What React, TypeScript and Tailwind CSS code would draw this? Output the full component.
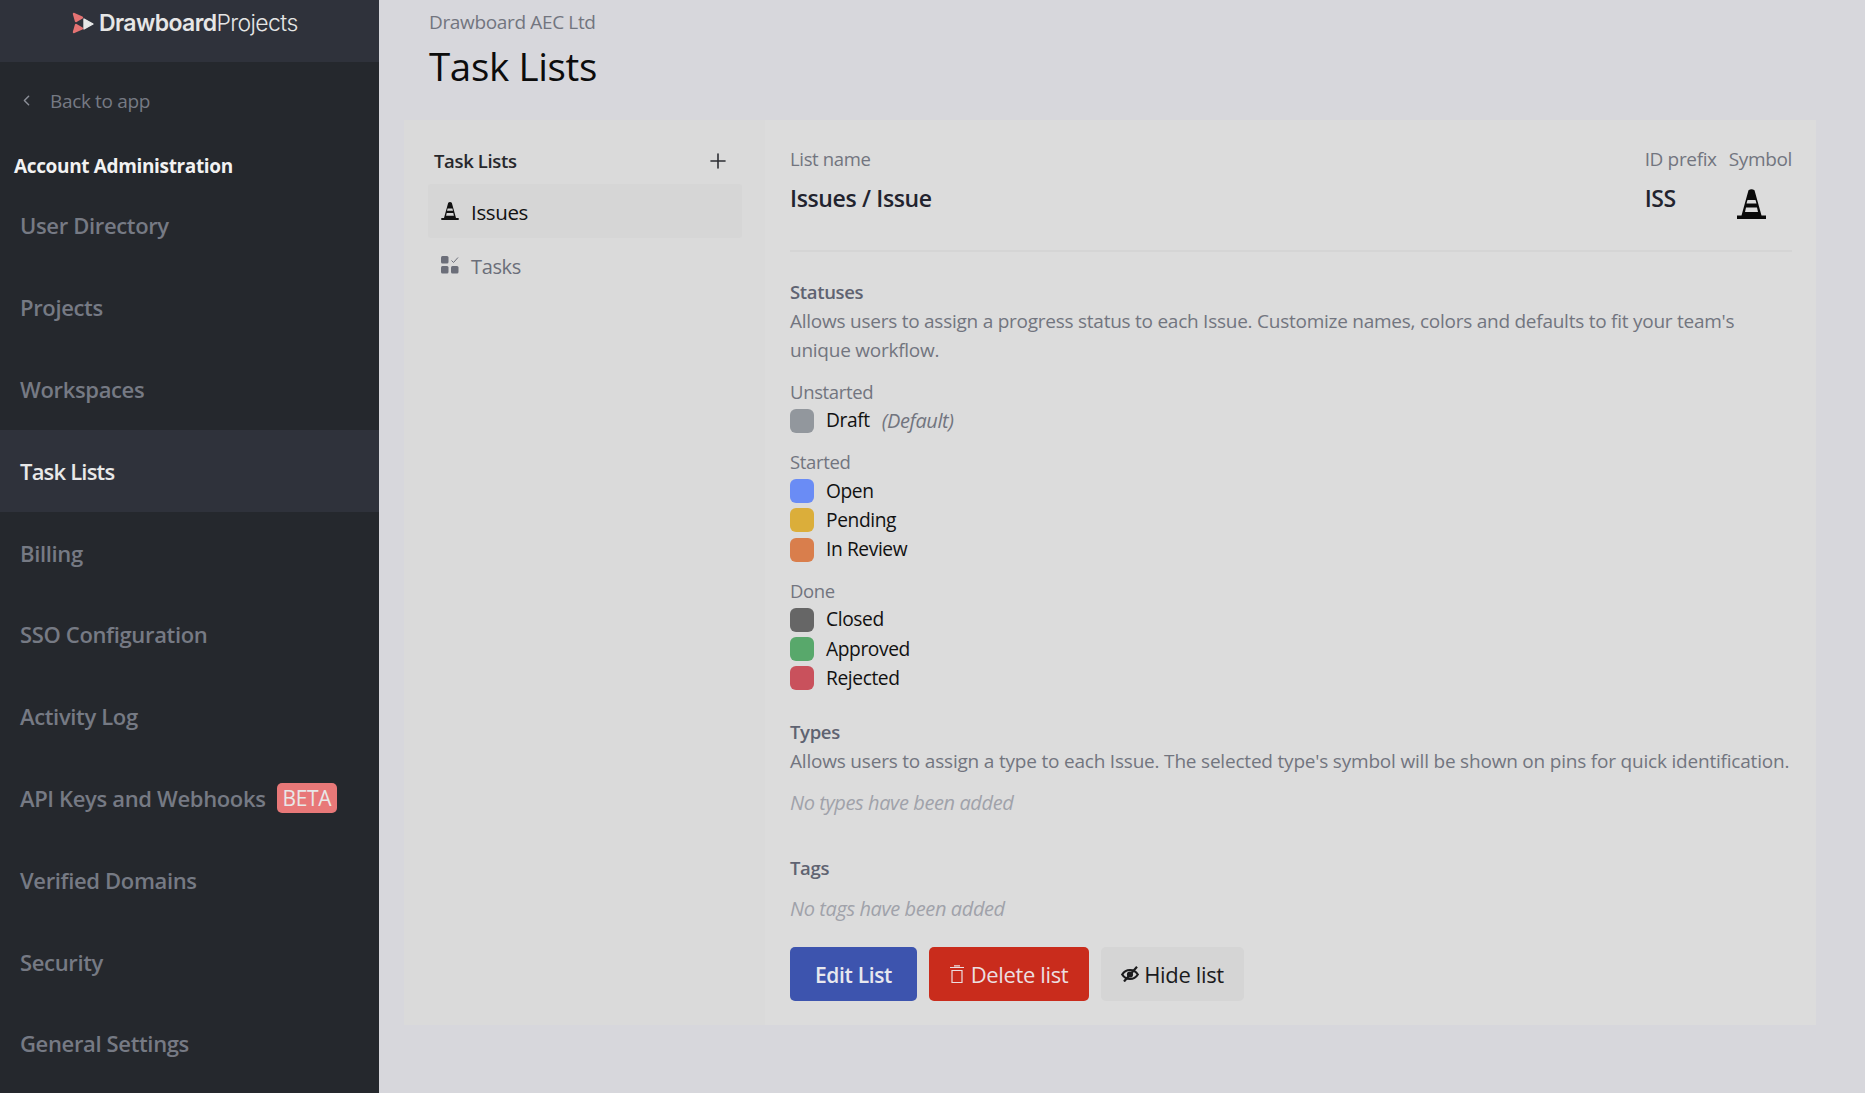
import { ReactNode } from 'react';
import { ChevronLeft, Plus } from 'lucide-react';

const NAV_ITEMS = [
  'User Directory',
  'Projects',
  'Workspaces',
  'Task Lists',
  'Billing',
  'SSO Configuration',
  'Activity Log',
  'API Keys and Webhooks',
  'Verified Domains',
  'Security',
  'General Settings',
];

const STATUS_GROUPS = [
  { name: 'Unstarted', items: [{ label: 'Draft', swatch: 'bg-[#92979d]', isDefault: true }] },
  {
    name: 'Started',
    items: [
      { label: 'Open', swatch: 'bg-[#6a8cf5]' },
      { label: 'Pending', swatch: 'bg-[#dbae3a]' },
      { label: 'In Review', swatch: 'bg-[#d97e4c]' },
    ],
  },
  {
    name: 'Done',
    items: [
      { label: 'Closed', swatch: 'bg-[#666666]' },
      { label: 'Approved', swatch: 'bg-[#58a86b]' },
      { label: 'Rejected', swatch: 'bg-[#c9515c]' },
    ],
  },
];

function Cone({ className }: { className?: string }) {
  return (
    <svg viewBox="0 0 29 30" className={className} fill="currentColor" fillRule="evenodd">
      <path d="M11.5 1.2q3-2 6 0L24.5 26.5H29V30H0v-3.5h4.5zM10.5 11h8l1 3.5H9.5zM9 18.5h11l1 4.5H8z" />
    </svg>
  );
}

function TasksIcon({ className }: { className?: string }) {
  return (
    <svg viewBox="0 0 18 18" className={className} fill="currentColor">
      <rect x="0" y="0" width="7.5" height="7.5" rx="1.5" />
      <rect x="0" y="10" width="7.5" height="7.5" rx="1.5" />
      <rect x="10" y="10" width="7.5" height="7.5" rx="1.5" />
      <path d="M10.5 4.5l2 2 4.5-5" fill="none" stroke="currentColor" strokeWidth="1" />
    </svg>
  );
}

function Logo() {
  return (
    <svg viewBox="0 0 22 22" className="h-[22px] w-[22px]" strokeLinejoin="round">
      <path d="M2 2l8 3.5L4 9z" fill="#e57373" stroke="#e57373" strokeWidth="2.4" />
      <path d="M2 20l8-3.5L4 13z" fill="#e57373" stroke="#e57373" strokeWidth="2.4" />
      <path d="M12 7l9 5-9 5z" fill="#e8e8e8" stroke="#e8e8e8" strokeWidth="1.4" />
    </svg>
  );
}

function SectionTitle({ children }: { children: ReactNode }) {
  return <div className="text-[18.5px] font-semibold leading-[29px] text-[#5f6371]">{children}</div>;
}

export default function App() {
  return (
    <div
      className="flex h-[1093px] overflow-hidden bg-[#d7d7dc] tracking-[-0.35px]"
      style={{ fontFamily: '"Open Sans", "Noto Sans", sans-serif' }}
    >
      {/* Sidebar */}
      <aside className="flex w-[379px] shrink-0 flex-col bg-[#25282d]">
        <div className="flex h-[62px] shrink-0 items-start bg-[#2f323b] pl-[72px] pt-[10px]">
          <div className="flex items-center gap-[5px]">
            <Logo />
            <span
              className="text-[23px] leading-[26px] tracking-[-0.6px] text-[#e6e6e6]"
              style={{ fontFamily: 'Inter, sans-serif' }}
            >
              <span className="font-semibold">Drawboard</span>
              <span className="font-light">Projects</span>
            </span>
          </div>
        </div>

        <div className="mt-[25px] flex h-[28px] items-center pl-[18px] text-[19px] text-[#767a84]">
          <ChevronLeft size={17} strokeWidth={2} className="mb-[2px] text-[#8b8f98]" />
          <span className="ml-[15px]">Back to app</span>
        </div>

        <div className="mt-[37px] h-[28px] pl-[14px] text-[19px] font-bold leading-[28px] text-[#f2f2f2]">
          Account Administration
        </div>

        <nav className="mt-[5px] flex flex-col">
          {NAV_ITEMS.map((item) => (
            <div
              key={item}
              className={`flex h-[81.8px] shrink-0 items-center pl-[20px] text-[22px] font-semibold ${
                item === 'Task Lists' ? 'bg-[#2f323b] tracking-[-0.8px] text-[#e8e8e8]' : 'text-[#767a84]'
              }`}
            >
              {item}
              {item === 'API Keys and Webhooks' && (
                <span className="ml-[11px] rounded-[5px] bg-[#e87878] px-[6px] text-[21px] font-normal leading-[30px] text-[#e8e8e8]">
                  BETA
                </span>
              )}
            </div>
          ))}
        </nav>
      </aside>

      {/* Main */}
      <main className="flex min-w-0 flex-1 flex-col">
        <div className="h-[120px] shrink-0 pl-[50px] pt-[8px]">
          <div className="text-[19px] leading-[28px] text-[#72757f]">Drawboard AEC Ltd</div>
          <h1 className="mt-[4px] text-[38.5px] leading-[52px] text-[#0c0c0c]">Task Lists</h1>
        </div>

        <div className="ml-[25px] mr-[49px] flex h-[905px] bg-[#dcdcdc]">
          <div className="w-[361px] shrink-0 bg-[#dadada] pl-[24px] pr-[23px] pt-[25px]">
            <div className="flex h-[32px] items-center justify-between pl-[6px] pr-[12px]">
              <span className="text-[18.5px] font-semibold text-[#27282c]">Task Lists</span>
              <Plus size={24} strokeWidth={1.6} className="text-[#2c2e33]" />
            </div>
            <div className="mt-[7px] flex h-[54px] items-center rounded-[3px] bg-[#d6d6d6] pl-[13px] text-[20.5px] text-[#111111]">
              <Cone className="h-[18px] w-[18px]" />
              <span className="ml-[12px] mt-[2px]">Issues</span>
            </div>
            <div className="flex h-[54px] items-center pl-[13px] text-[20px] text-[#6b6e79]">
              <TasksIcon className="h-[18px] w-[18px]" />
              <span className="ml-[12px] mt-[3px]">Tasks</span>
            </div>
          </div>

          <div className="min-w-0 flex-1 pl-[25px] pr-[24px] pt-[25px]">
            <div className="flex h-[107px] justify-between border-b-2 border-[#d5d5d5]">
              <div>
                <div className="text-[18.5px] leading-[28px] text-[#72757f]">List name</div>
                <div className="mt-[9px] text-[23px] font-semibold leading-[32px] text-[#22232e]">
                  Issues / Issue
                </div>
              </div>
              <div className="flex gap-[12px]">
                <div>
                  <div className="text-[19px] leading-[28px] text-[#72757f]">ID prefix</div>
                  <div className="mt-[9px] text-[23px] font-semibold leading-[32px] text-[#22232e]">ISS</div>
                </div>
                <div>
                  <div className="text-[19px] leading-[28px] text-[#72757f]">Symbol</div>
                  <Cone className="ml-[8px] mt-[16px] h-[30px] w-[29px] text-[#0a0a0a]" />
                </div>
              </div>
            </div>

            <div className="mt-[25px]">
              <SectionTitle>Statuses</SectionTitle>
              <p className="mt-[1px] text-[19px] leading-[29px] tracking-[-0.25px] text-[#72757f]">
                Allows users to assign a progress status to each Issue. Customize names, colors and defaults to fit
                your team's unique workflow.
              </p>
            </div>

            <div className="mt-[12px] flex flex-col gap-[12px]">
              {STATUS_GROUPS.map((group) => (
                <div key={group.name}>
                  <div className="text-[18.5px] leading-[29px] text-[#72757f]">{group.name}</div>
                  {group.items.map((status) => (
                    <div key={status.label} className="flex h-[29.3px] items-center">
                      <span className={`h-[24px] w-[24px] rounded-[6px] ${status.swatch}`} />
                      <span className="ml-[12px] text-[19.2px] tracking-[-0.4px] text-[#111111]">{status.label}</span>
                      {'isDefault' in status && (
                        <span className="ml-[12px] text-[20px] italic tracking-[-0.4px] text-[#72757f]">(Default)</span>
                      )}
                    </div>
                  ))}
                </div>
              ))}
            </div>

            <div className="mt-[24px]">
              <SectionTitle>Types</SectionTitle>
              <p className="mt-[1px] whitespace-nowrap text-[19px] leading-[29px] tracking-[-0.2px] text-[#72757f]">
                Allows users to assign a type to each Issue. The selected type's symbol will be shown on pins for
                quick identification.
              </p>
              <div className="mt-[12px] text-[20px] italic leading-[29px] tracking-[-0.4px] text-[#a0a2aa]">
                No types have been added
              </div>
            </div>

            <div className="mt-[36px]">
              <SectionTitle>Tags</SectionTitle>
              <div className="mt-[12px] text-[20px] italic leading-[29px] tracking-[-0.4px] text-[#a0a2aa]">
                No tags have been added
              </div>
            </div>

            <div className="mt-[24px] flex gap-[12px]">
              <button className="flex h-[54px] w-[127px] items-center justify-center rounded-[5px] bg-[#3d54ae] pt-[3px] text-[21px] font-semibold text-[#e8e8ee]">
                Edit List
              </button>
              <button className="flex h-[54px] w-[160px] items-center justify-center gap-[7px] rounded-[5px] bg-[#c92c1c] text-[22px] text-[#ecdfe0]">
                <svg viewBox="0 0 14 18" className="h-[18px] w-[14px]" fill="none" stroke="currentColor" strokeWidth="1.2">
                  <path d="M0 2.5h14M4 .8h6M2 5.5h10v12H2z" />
                </svg>
                Delete list
              </button>
              <button className="flex h-[54px] w-[143px] items-center justify-center gap-[5px] rounded-[5px] bg-[#d5d5d5] text-[22px] text-[#1b1b1d]">
                <svg viewBox="0 0 18 16" className="h-[16px] w-[18px]" fill="none" stroke="currentColor" strokeWidth="2.2">
                  <path d="M1.2 8.5S4 4 9 4s7.8 4.5 7.8 4.5S14 13 9 13 1.2 8.5 1.2 8.5z" />
                  <path d="M3 15.5 16 .8" />
                  <circle cx="9" cy="8.5" r="2" fill="currentColor" />
                </svg>
                Hide list
              </button>
            </div>
          </div>
        </div>
      </main>
    </div>
  );
}
